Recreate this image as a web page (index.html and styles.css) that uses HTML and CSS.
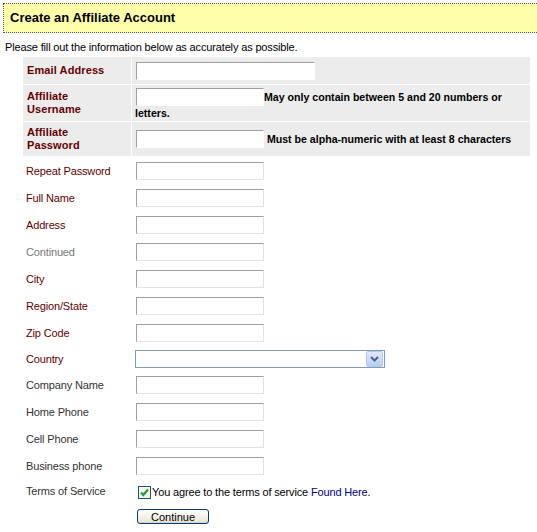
FILE: index.html
```html
<!DOCTYPE html>
<html lang="en">
<head>
  <meta charset="UTF-8">
  <title>Create an Affiliate Account</title>
  <link rel="stylesheet" href="styles.css">
</head>
<body>

<div class="page-title">Create an Affiliate Account</div>
<p class="intro">Please fill out the information below as accurately as possible.</p>

<form class="signup">
  <table class="fields">
    <!-- required account fields -->
    <tr class="req r1">
      <td class="lbl">Email Address</td>
      <td class="val"><input type="text" class="wide"></td>
    </tr>
    <tr class="req r2">
      <td class="lbl">Affiliate<br>Username</td>
      <td class="val"><input type="text"><span class="note">May only contain between 5 and 20 numbers or letters.</span></td>
    </tr>
    <tr class="req r3">
      <td class="lbl">Affiliate<br>Password</td>
      <td class="val"><input type="password"> <span class="note">Must be alpha-numeric with at least 8 characters</span></td>
    </tr>

    <!-- contact details -->
    <tr><td class="lbl red">Repeat Password</td><td class="val"><input type="password"></td></tr>
    <tr><td class="lbl red">Full Name</td><td class="val"><input type="text"></td></tr>
    <tr><td class="lbl red">Address</td><td class="val"><input type="text"></td></tr>
    <tr><td class="lbl grey">Continued</td><td class="val"><input type="text"></td></tr>
    <tr><td class="lbl red">City</td><td class="val"><input type="text"></td></tr>
    <tr><td class="lbl red">Region/State</td><td class="val"><input type="text"></td></tr>
    <tr><td class="lbl red">Zip Code</td><td class="val"><input type="text"></td></tr>
    <tr class="country">
      <td class="lbl red">Country</td>
      <td class="val">
        <div class="select-box">
          <select><option></option></select>
          <span class="drop">
            <svg width="9" height="6" viewBox="0 0 9 6"><path d="M1 1 L4.5 4.5 L8 1" fill="none" stroke="#4d6185" stroke-width="2"/></svg>
          </span>
        </div>
      </td>
    </tr>
    <tr><td class="lbl">Company Name</td><td class="val"><input type="text"></td></tr>
    <tr><td class="lbl">Home Phone</td><td class="val"><input type="text"></td></tr>
    <tr><td class="lbl">Cell Phone</td><td class="val"><input type="text"></td></tr>
    <tr><td class="lbl">Business phone</td><td class="val"><input type="text"></td></tr>
    <tr class="terms">
      <td class="lbl">Terms of Service</td>
      <td class="val">
        <span class="check">
          <svg width="11" height="11" viewBox="0 0 11 11"><path d="M2 5.5 L4.3 8 L9 2.5" fill="none" stroke="#21a121" stroke-width="2.2"/></svg>
        </span><span class="agree">You agree to the terms of service <a href="#">Found Here</a>.</span>
      </td>
    </tr>
    <tr class="submit">
      <td></td>
      <td class="val"><button type="button">Continue</button></td>
    </tr>
  </table>
</form>

</body>
</html>
```

FILE: styles.css
```css
body {
  margin: 0;
  padding: 3px 0 0 3px;
  font-family: "Liberation Sans", Arial, sans-serif;
  font-size: 11px;
  letter-spacing: -0.15px;
  color: #000;
  background: #fff;
}
.page-title {
  background: #ffffaa;
  border: 1px dotted #555;
  border-right: none;
  height: 28px;
  line-height: 28px;
  padding-left: 6px;
  font-size: 13px;
  font-weight: bold;
  letter-spacing: 0;
}
.intro { margin: 8px 0 0 2px; line-height: 13px; }

.fields {
  border-collapse: separate;
  border-spacing: 1px;
  margin: 2px 0 0 19px;
  width: 509px;
}
.fields td { padding: 5px 3px 3px; vertical-align: middle; }
.fields .lbl { width: 101px; color: #333; padding-left: 3px; }
.fields .lbl.red { color: #660000; }
.fields .lbl.grey { color: #777; }

.req td { background: #ececec; }
.req .lbl { color: #660000; font-weight: bold; line-height: 13px; letter-spacing: 0.1px; }
.r1 td { height: 19px; padding: 4px 3px; }
.r2 td { height: 28px; padding: 4px 3px; }
.r3 td { height: 23px; padding: 4px 3px; }
.r1 .lbl, .r2 .lbl, .r3 .lbl { padding-left: 4px; }
.r2 .val { vertical-align: top; padding: 3px 3px 0; line-height: 13px; }

input[type=text], input[type=password] {
  box-sizing: border-box;
  width: 128px;
  height: 18px;
  margin: 0 0 0 1px;
  padding: 1px 2px;
  border: 1px solid #e3e3e3;
  border-top-color: #a0a0a0;
  border-left-color: #a0a0a0;
  background: #fff;
  vertical-align: middle;
  font: inherit;
}
input.wide { width: 179px; }
.req input { border-right-color: #fff; border-bottom-color: #fff; }
.note { font-weight: bold; font-size: 10.6px; line-height: 13px; letter-spacing: 0; vertical-align: middle; }

.country td { padding: 4px 3px 2px; }
.select-box {
  display: flex;
  align-items: center;
  width: 248px;
  height: 16px;
  border: 1px solid #7f9db9;
  background: #fff;
}
.select-box select {
  flex: 1;
  appearance: none;
  border: none;
  outline: none;
  background: transparent;
  height: 16px;
}
.drop {
  display: flex;
  align-items: center;
  justify-content: center;
  width: 15px;
  height: 14px;
  margin-right: 1px;
  border: 1px solid #b5c8f0;
  border-radius: 2px;
  background: linear-gradient(#dfe9ff, #b9cdf7);
}

.terms td { padding: 5px 3px 2px; vertical-align: top; }
.terms .lbl { padding-top: 6px; }
.check {
  display: inline-flex;
  align-items: center;
  justify-content: center;
  width: 11px;
  height: 11px;
  margin: 0 1px 0 3px;
  border: 1px solid #1c5180;
  background: #f4f4f0;
  vertical-align: -2px;
}
.agree { line-height: 17px; }
.agree a { color: #000080; text-decoration: none; }

.submit td { padding: 5px 3px 6px; }
button {
  width: 72px;
  height: 15px;
  margin-left: 2px;
  padding: 0;
  border: 1px solid #003c74;
  border-radius: 3px;
  background: linear-gradient(#ffffff, #ece9d8 85%, #d6d0c5);
  font: inherit;
  line-height: 12px;
  color: #000;
}
```
